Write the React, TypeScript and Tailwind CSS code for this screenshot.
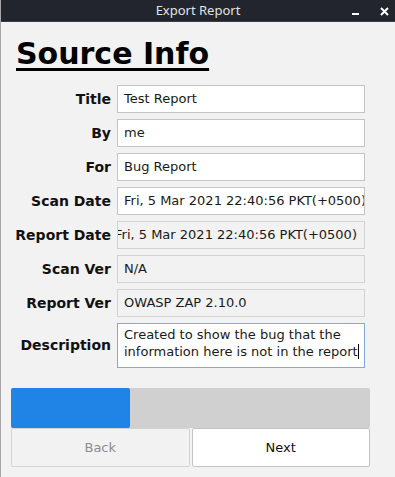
import React from 'react'

const dv = { fontFamily: '"DejaVu Sans", Verdana, sans-serif' }

function Field({
  label,
  value,
  editable = true,
  clipLeft = 0,
}: {
  label: string
  value: string
  editable?: boolean
  clipLeft?: number
}) {
  return (
    <div className="flex items-center h-[28px]">
      <div className="w-[110px] text-right text-[14px] font-bold text-[#111]">{label}</div>
      <div
        className={`ml-[6px] w-[248px] h-[28px] border overflow-hidden flex items-center whitespace-nowrap text-[13px] text-[#1a1a1a] ${
          editable ? 'bg-white border-[#c4c4c4]' : 'bg-[#f2f2f2] border-[#d2d2d2]'
        }`}
      >
        <span style={{ marginLeft: 6 - clipLeft }}>{value}</span>
      </div>
    </div>
  )
}

export default function App() {
  return (
    <div className="w-[395px] h-[477px] flex bg-[#f2f2f2] overflow-hidden" style={dv}>
      <div className="w-[1px] bg-[#a8a8a8] shrink-0" />
      <div className="flex-1 flex flex-col">
        {/* title bar */}
        <div className="h-[22px] bg-[#22252e] border-b border-[#3b3e46] relative flex items-center justify-center shrink-0">
          <span className="text-[13px] text-[#e2e2e2]" style={{ fontFamily: '"Noto Sans", sans-serif' }}>
            Export Report
          </span>
          <div className="absolute left-[351px] top-[13px] w-[7px] h-[2px] bg-white" />
          <svg className="absolute left-[379px] top-[7px]" width="9" height="9" viewBox="0 0 9 9">
            <path d="M1 1 L8 8 M8 1 L1 8" stroke="#fff" strokeWidth="2" />
          </svg>
        </div>

        {/* heading */}
        <div className="pl-[15px] pt-[14px] h-[63px]">
          <h1 className="text-[30px] font-bold leading-[36px] text-black underline decoration-[3px] underline-offset-[4px]">
            Source Info
          </h1>
        </div>

        {/* form */}
        <div className="flex flex-col gap-[6px]">
          <Field label="Title" value="Test Report" />
          <Field label="By" value="me" />
          <Field label="For" value="Bug Report" />
          <Field label="Scan Date" value="Fri, 5 Mar 2021 22:40:56 PKT(+0500)" />
          <Field label="Report Date" value="Fri, 5 Mar 2021 22:40:56 PKT(+0500)" editable={false} clipLeft={9} />
          <Field label="Scan Ver" value="N/A" editable={false} />
          <Field label="Report Ver" value="OWASP ZAP 2.10.0" editable={false} />
          <div className="flex items-center h-[45px]">
            <div className="w-[110px] text-right text-[14px] font-bold text-[#111]">Description</div>
            <div className="ml-[6px] w-[248px] h-[45px] bg-white border border-[#84a9d6] pl-[6px] pt-[2px] text-[13px] leading-[17px] text-[#1a1a1a]">
              Created to show the bug that the
              <br />
              information here is not in the report
              <span className="inline-block w-[1px] h-[15px] bg-black align-[-3px]" />
            </div>
          </div>
        </div>

        {/* progress */}
        <div className="mt-[20px] ml-[10px] w-[359px] h-[40px] bg-[#d0d0d0] rounded-[2px] flex">
          <div className="w-[119px] h-full bg-[#1f84e6] rounded-[2px]" />
        </div>

        {/* buttons */}
        <div className="ml-[10px] w-[359px] flex gap-[2px]">
          <button className="flex-1 h-[39px] bg-[#f2f2f2] border border-[#d4d4d4] rounded-[2px] text-[13px] text-[#8c8c8c]">
            Back
          </button>
          <button className="flex-1 h-[39px] bg-white border border-[#c4c4c4] rounded-[2px] text-[13px] text-[#111]">
            Next
          </button>
        </div>
      </div>
    </div>
  )
}
